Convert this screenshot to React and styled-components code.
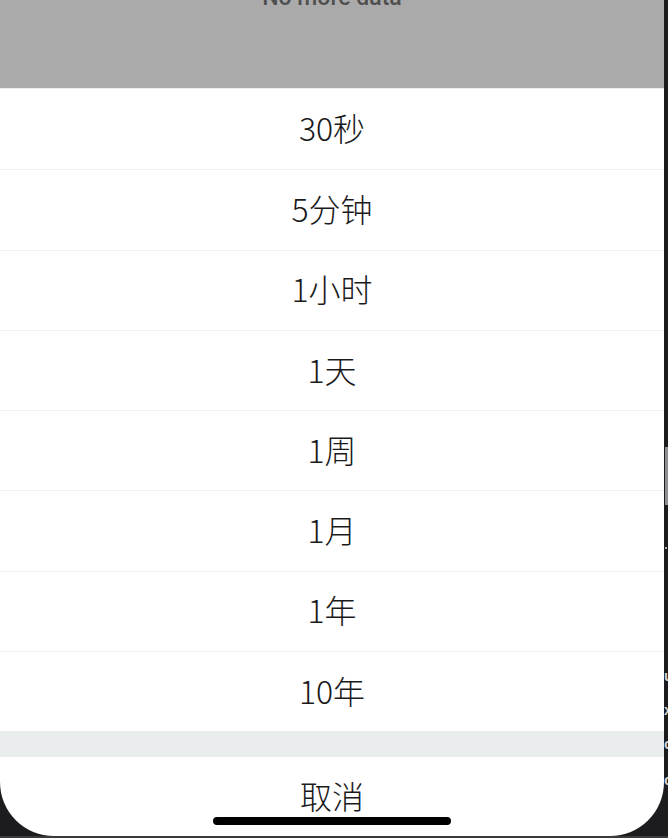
import styled, { createGlobalStyle } from "styled-components";

const GlobalStyle = createGlobalStyle`
  html, body {
    margin: 0;
    padding: 0;
    background: #1c1c1f;
    overflow: hidden;
  }
  * {
    box-sizing: border-box;
  }
`;

const Frame = styled.div`
  display: flex;
  width: 668px;
  height: 838px;
  background: #1c1c1f;
  border-bottom: 2px solid #3a3a3c;
`;

const Screen = styled.div`
  width: 664px;
  height: 836px;
  display: flex;
  flex-direction: column;
  background: #ffffff;
  border-radius: 0 0 54px 54px;
  overflow: hidden;
  font-family: "Noto Sans CJK SC", "Noto Sans", sans-serif;
`;

const Mask = styled.div`
  height: 89px;
  flex-shrink: 0;
  background: #aaaaaa;
  border-bottom: 1px solid #ececec;
  overflow: hidden;
  display: flex;
  justify-content: center;
`;

const Hint = styled.div`
  margin-top: -14px;
  font-family: Roboto, "Noto Sans", sans-serif;
  font-weight: 500;
  font-size: 23px;
  line-height: 24px;
  color: #4f4f4f;
`;

const Sheet = styled.div`
  display: flex;
  flex-direction: column;
  flex: 1;
`;

const Option = styled.div`
  height: 80.3px;
  flex-shrink: 0;
  display: flex;
  align-items: center;
  justify-content: center;
  padding-bottom: 4px;
  border-top: ${(p) => (p.$first ? "none" : "1px solid #f1f1f1")};
  font-size: 32px;
  font-weight: 300;
  color: #1a1a1a;
`;

const Gap = styled.div`
  height: 25.6px;
  flex-shrink: 0;
  background: #eaeded;
`;

const Cancel = styled.div`
  height: 80px;
  flex-shrink: 0;
  display: flex;
  align-items: center;
  justify-content: center;
  padding-bottom: 4px;
  font-size: 32px;
  font-weight: 300;
  color: #1a1a1a;
`;

const HomeBar = styled.div`
  display: flex;
  justify-content: center;
  margin-top: -20px;
`;

const Indicator = styled.div`
  width: 238px;
  height: 8px;
  border-radius: 4px;
  background: #000000;
`;

const Edge = styled.div`
  flex: 1;
  display: flex;
  flex-direction: column;
  overflow: hidden;
  padding-top: 447px;
`;

const Thumb = styled.div`
  height: 58px;
  margin-left: 1px;
  background: #8e8e93;
`;

const Dot = styled.div`
  width: 2px;
  height: 2px;
  margin: 42px 0 0 1px;
  background: #b0b0b0;
`;

const Glyph = styled.span`
  margin-top: ${(p) => p.$gap}px;
  font-family: "Liberation Sans", sans-serif;
  font-weight: 700;
  font-size: 15px;
  line-height: 14px;
  color: #d0d0d0;
  white-space: nowrap;
`;

const options = ["30秒", "5分钟", "1小时", "1天", "1周", "1月", "1年", "10年"];

export default function App() {
  return (
    <>
      <GlobalStyle />
      <Frame>
        <Screen>
          <Mask>
            <Hint>No more data</Hint>
          </Mask>
          <Sheet>
            {options.map((label, i) => (
              <Option key={label} $first={i === 0}>
                {label}
              </Option>
            ))}
            <Gap />
            <Cancel>取消</Cancel>
            <HomeBar>
              <Indicator />
            </HomeBar>
          </Sheet>
        </Screen>
        <Edge>
          <Thumb />
          <Dot />
          <Glyph $gap={120}>u</Glyph>
          <Glyph $gap={20}>x</Glyph>
          <Glyph $gap={20}>c</Glyph>
          <Glyph $gap={22}>c</Glyph>
        </Edge>
      </Frame>
    </>
  );
}
